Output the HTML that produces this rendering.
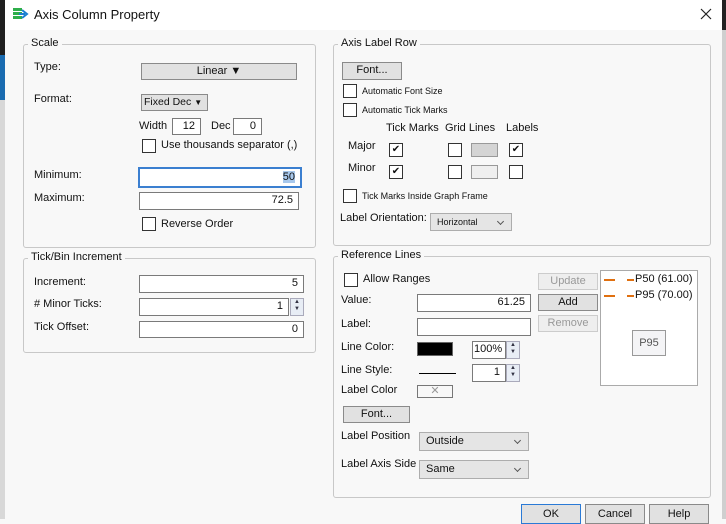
<!DOCTYPE html><html><head><style>
*{box-sizing:border-box;margin:0;padding:0}
body{width:726px;height:519px;overflow:hidden;background:#f8f8f8;font-family:"Liberation Sans",sans-serif;font-size:11px;color:#111;position:relative}
.a{position:absolute;white-space:nowrap}
.g{position:absolute;border:1px solid #c8c8c8;border-radius:3px}
.lg{position:absolute;background:#f8f8f8;padding:0 3px;font-size:11px;top:-8px;left:4px}
.in{position:absolute;background:#fff;border:1px solid #7a7a7a;text-align:right;padding-right:5px;line-height:15px;font-size:11px;white-space:nowrap}
.cb{position:absolute;width:14px;height:14px;border:1px solid #333;background:#fff;font-size:10px;line-height:12px;text-align:center}
.bt{position:absolute;background:#e1e1e1;border:1px solid #8a8a8a;text-align:center;line-height:15px;font-size:11px;white-space:nowrap}
.dd{position:absolute;background:#e5e5e5;border:1px solid #adadad;padding-left:6px;line-height:16px;font-size:11px;white-space:nowrap}
.dd:after{content:"";position:absolute;right:8px;top:5px;width:4px;height:4px;border-right:1px solid #555;border-bottom:1px solid #555;transform:rotate(45deg)}
.sp{position:absolute;width:14px;border:1px solid #aab;background:#e8edf5;font-size:6px;line-height:7px;text-align:center;color:#334}
.s{font-size:9px}
</style></head><body>
<div class="a" style="left:0;top:0;width:726px;height:30px;background:#fff"></div>
<div class="a" style="left:0;top:0;width:5px;height:55px;background:#1f1f1f"></div>
<div class="a" style="left:0;top:55px;width:5px;height:45px;background:#1a6bb0"></div>
<div class="a" style="left:0;top:100px;width:5px;height:419px;background:#d8d8d8"></div>
<div class="a" style="left:722px;top:0;width:4px;height:519px;background:#cfcfcf"></div>
<div class="a" style="left:722px;top:0;width:4px;height:30px;background:#222"></div>
<svg class="a" style="left:12px;top:7px" width="17" height="14"><rect x="1" y="1" width="9" height="3" fill="#2eae4a"/><rect x="1" y="5" width="9" height="3" fill="#2eae4a"/><rect x="1" y="9" width="9" height="3" fill="#2eae4a"/><path d="M7 7h6M10 3l5 4-5 4" stroke="#1a7fd0" stroke-width="2" fill="none"/></svg>
<div class="a" style="left:34px;top:7px;font-size:13px">Axis Column Property</div>
<svg class="a" style="left:700px;top:8px" width="12" height="12"><path d="M1 1L11 11M11 1L1 11" stroke="#222" stroke-width="1.2"/></svg>

<div class="g" style="left:23px;top:44px;width:293px;height:204px"><div class="lg">Scale</div></div>
<div class="a" style="left:34px;top:61px">Type:</div>
<div class="bt" style="left:141px;top:63px;width:156px;height:17px">Linear ▼</div>
<div class="a" style="left:34px;top:93px">Format:</div>
<div class="bt" style="left:141px;top:94px;width:67px;height:17px;text-align:left;padding-left:2px;font-size:10.5px">Fixed Dec <span style="font-size:8px">▼</span></div>
<div class="a" style="left:139px;top:120px">Width</div>
<div class="in" style="left:172px;top:118px;width:29px;height:17px">12</div>
<div class="a" style="left:211px;top:120px">Dec</div>
<div class="in" style="left:233px;top:118px;width:29px;height:17px">0</div>
<div class="cb" style="left:142px;top:139px"></div>
<div class="a" style="left:161px;top:139px">Use thousands separator (,)</div>
<div class="a" style="left:34px;top:169px">Minimum:</div>
<div class="in" style="left:138px;top:167px;width:164px;height:21px;border:2px solid #3b7fd0;line-height:16px"><span style="background:#a8c8ec">50</span></div>
<div class="a" style="left:34px;top:192px">Maximum:</div>
<div class="in" style="left:139px;top:192px;width:160px;height:18px">72.5</div>
<div class="cb" style="left:142px;top:217px"></div>
<div class="a" style="left:161px;top:218px">Reverse Order</div>

<div class="g" style="left:23px;top:258px;width:293px;height:95px"><div class="lg">Tick/Bin Increment</div></div>
<div class="a" style="left:34px;top:276px">Increment:</div>
<div class="in" style="left:139px;top:275px;width:165px;height:18px">5</div>
<div class="a" style="left:34px;top:298px"># Minor Ticks:</div>
<div class="in" style="left:139px;top:298px;width:150px;height:18px">1</div>
<div class="sp" style="left:290px;top:298px;height:18px">▲<br>▼</div>
<div class="a" style="left:34px;top:321px">Tick Offset:</div>
<div class="in" style="left:139px;top:321px;width:165px;height:17px">0</div>

<div class="g" style="left:333px;top:44px;width:378px;height:202px"><div class="lg">Axis Label Row</div></div>
<div class="bt" style="left:342px;top:62px;width:60px;height:18px">Font...</div>
<div class="cb" style="left:343px;top:84px"></div><div class="a s" style="left:362px;top:86px">Automatic Font Size</div>
<div class="cb" style="left:343px;top:103px"></div><div class="a s" style="left:362px;top:105px">Automatic Tick Marks</div>
<div class="a" style="left:386px;top:122px">Tick Marks</div>
<div class="a" style="left:445px;top:122px">Grid Lines</div>
<div class="a" style="left:506px;top:122px">Labels</div>
<div class="a" style="left:348px;top:140px">Major</div>
<div class="cb" style="left:389px;top:143px">✔</div>
<div class="cb" style="left:448px;top:143px"></div>
<div class="a" style="left:471px;top:143px;width:27px;height:14px;background:#d4d4d4;border:1px solid #999"></div>
<div class="cb" style="left:509px;top:143px">✔</div>
<div class="a" style="left:348px;top:162px">Minor</div>
<div class="cb" style="left:389px;top:165px">✔</div>
<div class="cb" style="left:448px;top:165px"></div>
<div class="a" style="left:471px;top:165px;width:27px;height:14px;background:#efefef;border:1px solid #999"></div>
<div class="cb" style="left:509px;top:165px"></div>
<div class="cb" style="left:343px;top:189px"></div><div class="a s" style="left:362px;top:191px">Tick Marks Inside Graph Frame</div>
<div class="a" style="left:340px;top:212px">Label Orientation:</div>
<div class="dd s" style="left:430px;top:213px;width:82px;height:18px">Horizontal</div>

<div class="g" style="left:333px;top:256px;width:378px;height:242px"><div class="lg">Reference Lines</div></div>
<div class="cb" style="left:344px;top:273px"></div>
<div class="a" style="left:363px;top:273px">Allow Ranges</div>
<div class="bt" style="left:538px;top:273px;width:60px;height:17px;color:#999;background:#eee;border-color:#ccc">Update</div>
<div class="bt" style="left:538px;top:294px;width:60px;height:17px">Add</div>
<div class="bt" style="left:538px;top:315px;width:60px;height:17px;color:#999;background:#eee;border-color:#ccc">Remove</div>
<div class="a" style="left:600px;top:270px;width:98px;height:116px;background:#fff;border:1px solid #aaa"></div>
<div class="a" style="left:604px;top:279px;width:11px;height:2px;background:#e07010"></div>
<div class="a" style="left:627px;top:279px;width:7px;height:2px;background:#e07010"></div>
<div class="a" style="left:635px;top:273px">P50 (61.00)</div>
<div class="a" style="left:604px;top:295px;width:11px;height:2px;background:#e07010"></div>
<div class="a" style="left:627px;top:295px;width:7px;height:2px;background:#e07010"></div>
<div class="a" style="left:635px;top:289px">P95 (70.00)</div>
<div class="a" style="left:632px;top:330px;width:34px;height:26px;border:1px solid #999;background:#f4f4f6;text-align:center;line-height:24px;color:#555">P95</div>
<div class="a" style="left:341px;top:294px">Value:</div>
<div class="in" style="left:417px;top:294px;width:114px;height:18px">61.25</div>
<div class="a" style="left:341px;top:318px">Label:</div>
<div class="in" style="left:417px;top:318px;width:114px;height:18px"></div>
<div class="a" style="left:341px;top:341px">Line Color:</div>
<div class="a" style="left:417px;top:342px;width:36px;height:14px;background:#000;border:1px solid #666"></div>
<div class="in" style="left:472px;top:341px;width:34px;height:18px;text-align:left;padding-left:1px">100%</div>
<div class="sp" style="left:506px;top:341px;height:18px">▲<br>▼</div>
<div class="a" style="left:341px;top:364px">Line Style:</div>
<div class="a" style="left:419px;top:373px;width:37px;height:1px;background:#000"></div>
<div class="in" style="left:472px;top:364px;width:34px;height:18px">1</div>
<div class="sp" style="left:506px;top:364px;height:18px">▲<br>▼</div>
<div class="a" style="left:341px;top:384px">Label Color</div>
<div class="a" style="left:417px;top:385px;width:36px;height:13px;border:1px solid #777;background:#f8f8f8;text-align:center;line-height:10px;color:#999;font-size:11px">✕</div>
<div class="bt" style="left:343px;top:406px;width:67px;height:17px">Font...</div>
<div class="a" style="left:341px;top:430px">Label Position</div>
<div class="dd" style="left:419px;top:432px;width:110px;height:19px">Outside</div>
<div class="a" style="left:341px;top:458px">Label Axis Side</div>
<div class="dd" style="left:419px;top:460px;width:110px;height:19px">Same</div>

<div class="bt" style="left:521px;top:504px;width:60px;height:20px;border-color:#2a7ad6;line-height:18px">OK</div>
<div class="bt" style="left:585px;top:504px;width:60px;height:20px;line-height:18px">Cancel</div>
<div class="bt" style="left:649px;top:504px;width:60px;height:20px;line-height:18px">Help</div>
</body></html>
